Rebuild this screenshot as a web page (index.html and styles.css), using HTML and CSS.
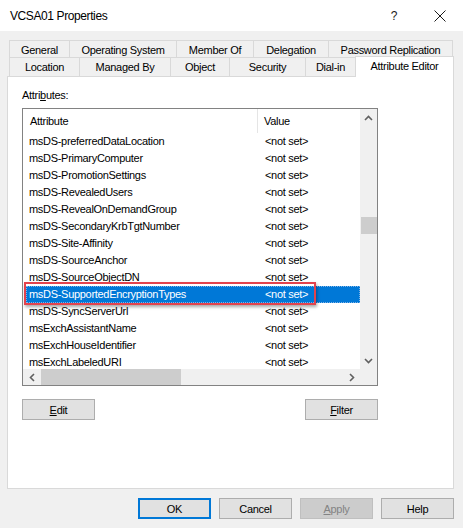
FILE: index.html
```html
<!DOCTYPE html>
<html>
<head>
<meta charset="utf-8">
<link rel="stylesheet" href="styles.css">
</head>
<body>
<div class="window">
  <div class="titlebar">
    <span class="title">VCSA01 Properties</span>
    <span class="help">?</span>
    <span class="close"><svg width="12" height="12" viewBox="0 0 12 12"><path d="M0.5 0.5 L11.5 11.5 M11.5 0.5 L0.5 11.5" stroke="#1a1a1a" stroke-width="1" fill="none"/></svg></span>
  </div>
  <div class="body">
    <div class="tabs">
      <div class="tabrow row1">
        <div class="tab">General</div>
        <div class="tab">Operating System</div>
        <div class="tab">Member Of</div>
        <div class="tab">Delegation</div>
        <div class="tab">Password Replication</div>
      </div>
      <div class="tabrow row2">
        <div class="tab">Location</div>
        <div class="tab">Managed By</div>
        <div class="tab">Object</div>
        <div class="tab">Security</div>
        <div class="tab">Dial-in</div>
        <div class="tab selected">Attribute Editor</div>
      </div>
    </div>
    <div class="panel">
      <div class="label">Attri<u>b</u>utes:</div>
      <div class="listbox">
        <div class="listview">
          <div class="header">
            <div class="h-attr">Attribute</div>
            <div class="h-val">Value</div>
          </div>
          <div class="rows">
            <div class="row"><span class="c-attr">msDS-preferredDataLocation</span><span class="c-val">&lt;not set&gt;</span></div>
            <div class="row"><span class="c-attr">msDS-PrimaryComputer</span><span class="c-val">&lt;not set&gt;</span></div>
            <div class="row"><span class="c-attr">msDS-PromotionSettings</span><span class="c-val">&lt;not set&gt;</span></div>
            <div class="row"><span class="c-attr">msDS-RevealedUsers</span><span class="c-val">&lt;not set&gt;</span></div>
            <div class="row"><span class="c-attr">msDS-RevealOnDemandGroup</span><span class="c-val">&lt;not set&gt;</span></div>
            <div class="row"><span class="c-attr">msDS-SecondaryKrbTgtNumber</span><span class="c-val">&lt;not set&gt;</span></div>
            <div class="row"><span class="c-attr">msDS-Site-Affinity</span><span class="c-val">&lt;not set&gt;</span></div>
            <div class="row"><span class="c-attr">msDS-SourceAnchor</span><span class="c-val">&lt;not set&gt;</span></div>
            <div class="row"><span class="c-attr">msDS-SourceObjectDN</span><span class="c-val">&lt;not set&gt;</span></div>
            <div class="row sel"><span class="c-attr">msDS-SupportedEncryptionTypes</span><span class="c-val">&lt;not set&gt;</span><span class="annot"></span></div>
            <div class="row"><span class="c-attr">msDS-SyncServerUrl</span><span class="c-val">&lt;not set&gt;</span></div>
            <div class="row"><span class="c-attr">msExchAssistantName</span><span class="c-val">&lt;not set&gt;</span></div>
            <div class="row"><span class="c-attr">msExchHouseIdentifier</span><span class="c-val">&lt;not set&gt;</span></div>
            <div class="row"><span class="c-attr">msExchLabeledURI</span><span class="c-val">&lt;not set&gt;</span></div>
          </div>
        </div>
        <div class="vscroll">
          <div class="sbtn"><svg width="9" height="6" viewBox="0 0 9 6"><path d="M1 5 L4.5 1.5 L8 5" stroke="#606060" stroke-width="1.6" fill="none"/></svg></div>
          <div class="vtrack"><div class="vthumb"></div></div>
          <div class="sbtn"><svg width="9" height="6" viewBox="0 0 9 6"><path d="M1 1 L4.5 4.5 L8 1" stroke="#606060" stroke-width="1.6" fill="none"/></svg></div>
        </div>
        <div class="hscroll">
          <div class="sbtn"><svg width="6" height="9" viewBox="0 0 6 9"><path d="M5 1 L1.5 4.5 L5 8" stroke="#606060" stroke-width="1.6" fill="none"/></svg></div>
          <div class="htrack"><div class="hthumb"></div></div>
          <div class="sbtn"><svg width="6" height="9" viewBox="0 0 6 9"><path d="M1 1 L4.5 4.5 L1 8" stroke="#606060" stroke-width="1.6" fill="none"/></svg></div>
        </div>
        <div class="corner"></div>
      </div>
      <div class="actions">
        <button class="btn"><u>E</u>dit</button>
        <button class="btn"><u>F</u>ilter</button>
      </div>
    </div>
    <div class="footer">
      <button class="btn default">OK</button>
      <button class="btn">Cancel</button>
      <button class="btn disabled"><u>A</u>pply</button>
      <button class="btn">Help</button>
    </div>
  </div>
</div>
</body>
</html>
```

FILE: styles.css
```css
* { box-sizing: border-box; }
html, body { margin: 0; padding: 0; }
body {
  width: 463px;
  height: 528px;
  overflow: hidden;
  font-family: "Liberation Sans", Arial, sans-serif;
  font-size: 11px;
  letter-spacing: -0.3px;
  color: #000;
  background: #f0f0f0;
}
.window { width: 463px; height: 528px; display: flex; flex-direction: column; }

.titlebar {
  height: 31px;
  background: #fff;
  display: flex;
  align-items: center;
  padding-left: 10px;
}
.title { font-size: 12px; letter-spacing: -0.4px; flex: 1; color: #000; }
.help { font-size: 12px; width: 12px; margin-right: 34px; text-align: center; color: #1a1a1a; }
.close { width: 12px; height: 12px; margin-right: 17px; display: flex; }

.body { flex: 1; padding: 9px 9px 0 7px; display: flex; flex-direction: column; }

.tabs { margin-left: 2px; display: flex; flex-direction: column; }
.tabrow { display: flex; }
.tab {
  border: 1px solid #d9d9d9;
  border-bottom: none;
  margin-right: -1px;
  background: #f0f0f0;
  text-align: center;
  white-space: nowrap;
}
.row1 .tab { height: 17px; line-height: 17px; padding-top: 1px; }
.row2 .tab { height: 19px; line-height: 19px; }
.row1 .tab:nth-child(1) { width: 61px; }
.row1 .tab:nth-child(2) { width: 108px; }
.row1 .tab:nth-child(3) { width: 78px; }
.row1 .tab:nth-child(4) { width: 76px; }
.row1 .tab:nth-child(5) { width: 125px; }
.row2 .tab:nth-child(1) { width: 71px; }
.row2 .tab:nth-child(2) { width: 92px; }
.row2 .tab:nth-child(3) { width: 60px; }
.row2 .tab:nth-child(4) { width: 77px; }
.row2 .tab:nth-child(5) { width: 51px; }
.row2 .tab.selected {
  width: 99px;
  height: 21px;
  margin-top: -1px;
  margin-bottom: -1px;
  line-height: 18px;
  background: #fff;
  position: relative;
  z-index: 2;
}

.panel {
  width: 447px;
  height: 413px;
  background: #fff;
  border: 1px solid #d9d9d9;
  padding-left: 14px;
}
.label { margin-top: 11px; line-height: 15px; height: 15px; margin-bottom: 5px; }

.listbox {
  width: 356px;
  height: 278px;
  border: 1px solid #828282;
  display: grid;
  grid-template-columns: 1fr 17px;
  grid-template-rows: 1fr 16px;
}
.listview { overflow: hidden; position: relative; }
.header {
  height: 24px;
  display: flex;
  align-items: center;
}
.h-attr { width: 235px; padding-left: 7px; height: 24px; line-height: 24px; border-right: 1px solid #e5e5e5; }
.h-val { padding-left: 6px; line-height: 24px; }
.rows { display: flex; flex-direction: column; }
.row {
  height: 17px;
  line-height: 17px;
  margin-left: 3px;
  display: flex;
  white-space: nowrap;
  position: relative;
}
.c-attr { width: 232px; padding-left: 3px; }
.c-val { padding-left: 7px; }
.row.sel {
  background: #0078d7;
  color: #fff;
  outline: 1px dotted #7fb3e8;
  outline-offset: -1px;
}
.annot {
  position: absolute;
  left: -2px;
  top: -4px;
  width: 292px;
  height: 23px;
  border: 2px solid #e3434d;
  box-shadow: 1px 2px 3px rgba(0,0,0,0.35);
  pointer-events: none;
}

.vscroll { background: #f0f0f0; display: flex; flex-direction: column; }
.hscroll { background: #f0f0f0; display: flex; }
.corner { background: #f0f0f0; }
.sbtn { width: 17px; height: 17px; display: flex; align-items: center; justify-content: center; flex: none; }
.hscroll .sbtn { height: 16px; }
.vtrack { flex: 1; }
.vthumb { margin-top: 91px; height: 17px; margin-left: 1px; margin-right: 0; background: #cdcdcd; }
.htrack { flex: 1; }
.hthumb { margin-left: 1px; width: 140px; height: 16px; background: #cdcdcd; }

.actions {
  width: 356px;
  margin-top: 13px;
  display: flex;
  justify-content: space-between;
}
.btn {
  font-family: inherit;
  font-size: 11px;
  letter-spacing: -0.3px;
  width: 73px;
  height: 21px;
  padding: 0;
  background: #e1e1e1;
  border: 1px solid #adadad;
  color: #000;
  border-radius: 0;
}
.btn u { text-underline-offset: 1px; }
.footer {
  margin-top: 9px;
  display: flex;
  justify-content: flex-end;
  gap: 8px;
}
.btn.default { border: 2px solid #0078d7; }
.btn.disabled { background: #cccccc; border-color: #bfbfbf; color: #838383; }
```
